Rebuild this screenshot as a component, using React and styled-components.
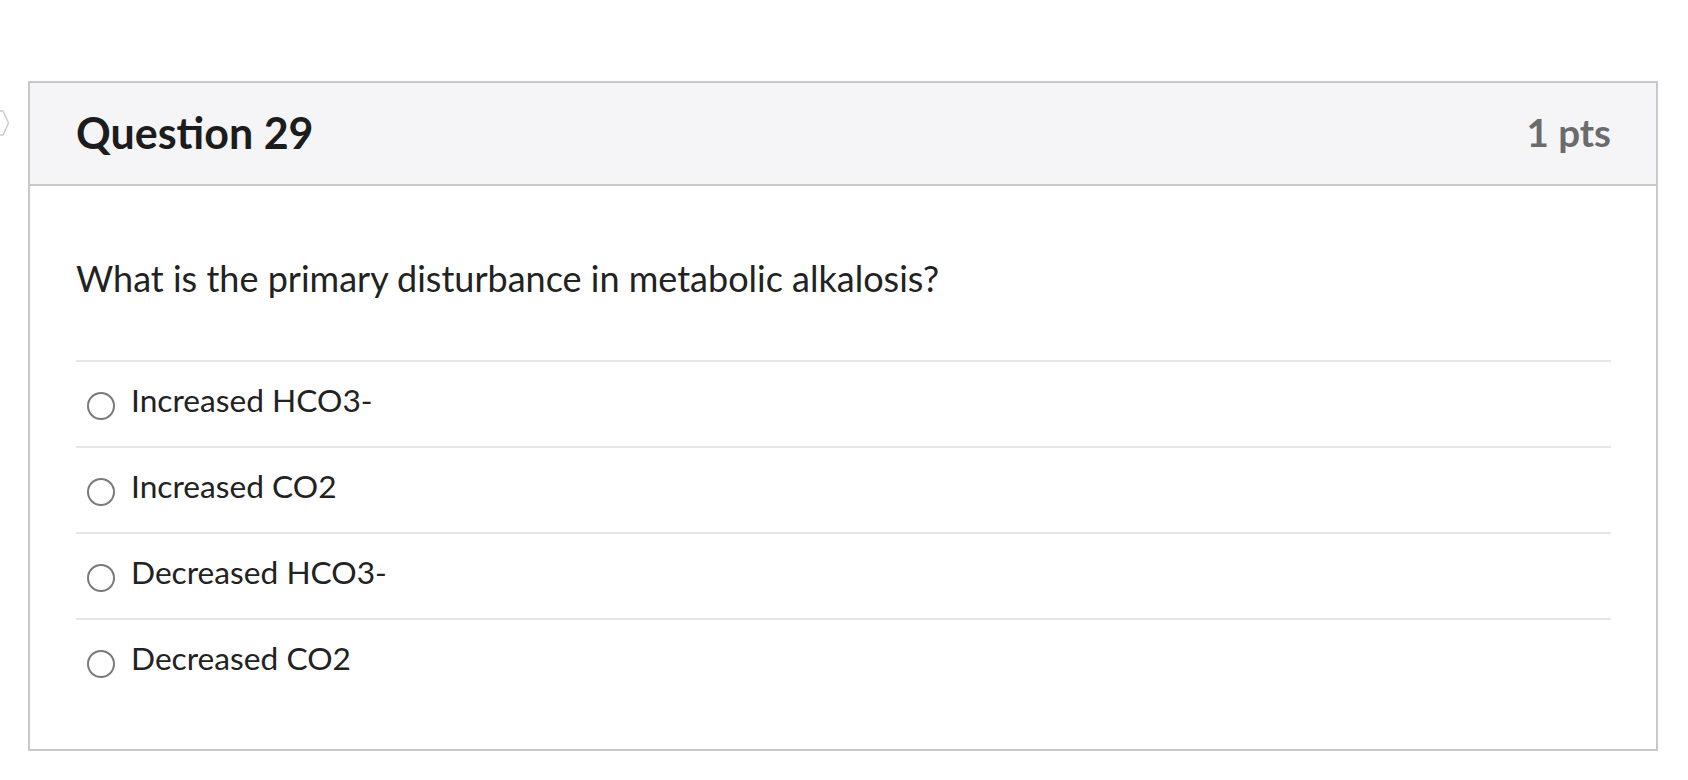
import styled, { createGlobalStyle } from 'styled-components';

const GlobalStyle = createGlobalStyle`
  html, body {
    margin: 0;
    padding: 0;
    background: #ffffff;
    font-family: Lato, "Liberation Sans", sans-serif;
  }
`;

const Page = styled.div`
  position: relative;
  padding: 81px 0 0 28px;
`;

const Flag = styled.svg`
  position: absolute;
  left: 0;
  top: 110px;
`;

const QuestionCard = styled.div`
  width: 1630px;
  box-sizing: border-box;
  border: 2px solid #c8c8ca;
  background: #fff;
`;

const Header = styled.div`
  display: flex;
  justify-content: space-between;
  align-items: center;
  height: 103px;
  box-sizing: border-box;
  padding: 0 45px 3px 46px;
  background: #f5f5f7;
  border-bottom: 2px solid #c8c8ca;
`;

const Title = styled.h2`
  margin: 0;
  font-size: 43px;
  font-weight: 700;
  color: #1c1c1c;
`;

const Points = styled.span`
  font-size: 38.5px;
  font-weight: 700;
  color: #6b6b6d;
`;

const Body = styled.div`
  padding: 70px 45px 45px 46px;
`;

const Prompt = styled.p`
  margin: 0 0 60px;
  font-size: 36px;
  color: #222;
`;

const Answers = styled.div`
  display: flex;
  flex-direction: column;
`;

const Answer = styled.label`
  display: flex;
  align-items: flex-start;
  gap: 16px;
  padding: 19px 0 26px 11px;
  border-top: 2px solid #e6e6e8;
  font-size: 31.7px;
  color: #222;
`;

const Radio = styled.span`
  flex: none;
  width: 28px;
  height: 28px;
  margin-top: 11px;
  box-sizing: border-box;
  border: 2px solid #7a7a7a;
  border-radius: 50%;
  background: #fff;
`;

const options = ['Increased HCO3-', 'Increased CO2', 'Decreased HCO3-', 'Decreased CO2'];

export default function App() {
  return (
    <>
      <GlobalStyle />
      <Page>
        <Flag width="10" height="26" viewBox="0 0 10 26">
          <path d="M-4 1 L3 1 L8.5 13 L3 25 L-4 25" fill="none" stroke="#c9ccd0" strokeWidth="1.5" />
        </Flag>
        <QuestionCard>
          <Header>
            <Title>Question 29</Title>
            <Points>1 pts</Points>
          </Header>
          <Body>
            <Prompt>What is the primary disturbance in metabolic alkalosis?</Prompt>
            <Answers>
              {options.map(text => (
                <Answer key={text}>
                  <Radio />
                  <span>{text}</span>
                </Answer>
              ))}
            </Answers>
          </Body>
        </QuestionCard>
      </Page>
    </>
  );
}
